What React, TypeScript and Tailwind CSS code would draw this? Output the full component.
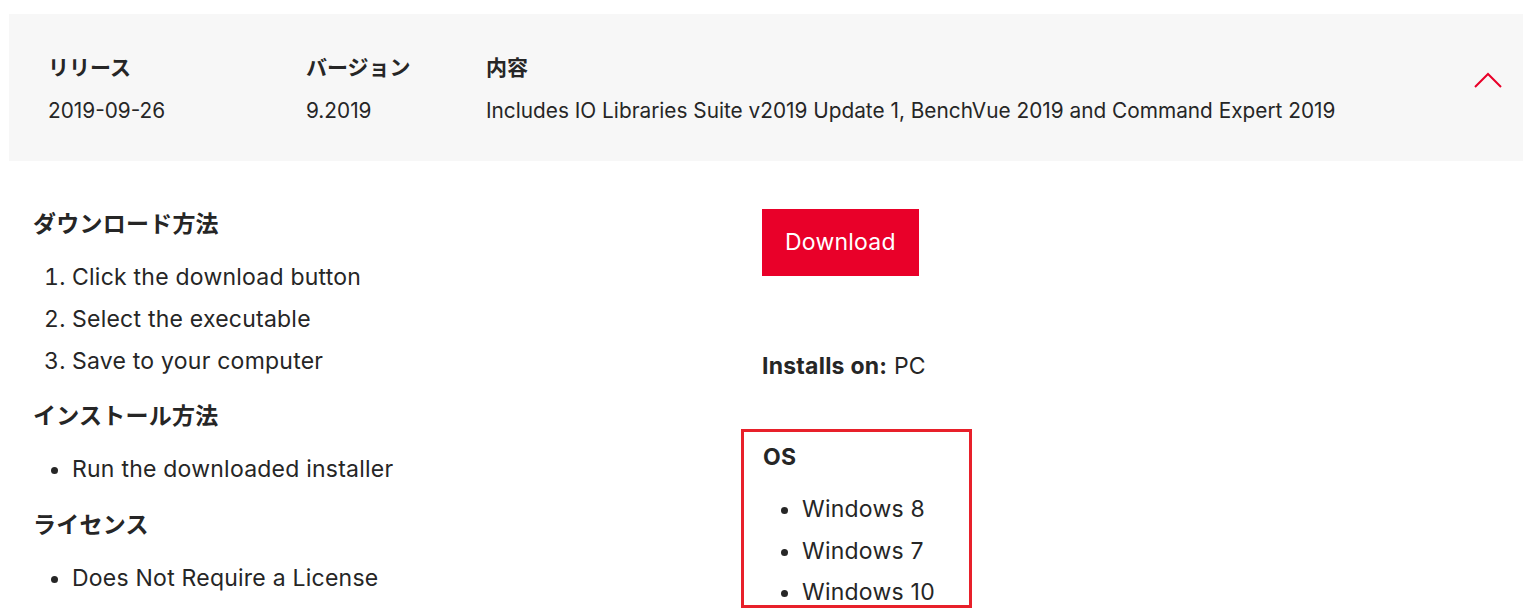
const font = "font-['Inter','Noto_Sans_CJK_JP',sans-serif]";

export default function App() {
  return (
    <div className={`w-[1536px] h-[609px] overflow-hidden bg-white text-[#262626] ${font}`}>
      {/* Release summary */}
      <div className="ml-[9px] mr-[13px] mt-[14px] h-[147px] bg-[#f7f7f7] flex items-start pl-[39px] pr-[21px] pt-[38px]">
        <Col label="リリース" value="2019-09-26" width="w-[258px]" />
        <Col label="バージョン" value="9.2019" width="w-[180px]" />
        <Col
          label="内容"
          value="Includes IO Libraries Suite v2019 Update 1, BenchVue 2019 and Command Expert 2019"
          width="flex-1"
        />
        <svg width="28" height="16" viewBox="0 0 28 16" className="mt-[20px] shrink-0">
          <polyline points="1,15 14,2 27,15" fill="none" stroke="#e90029" strokeWidth="2" />
        </svg>
      </div>

      {/* Details */}
      <div className="flex pl-[33px] text-[23px] tracking-[0.01em]">
        <div className="w-[729px] pt-[47px]">
          <Heading>ダウンロード方法</Heading>
          <ol className="list-decimal pl-[39px] mt-[16px] leading-[42px]">
            <li>Click the download button</li>
            <li>Select the executable</li>
            <li>Save to your computer</li>
          </ol>
          <Heading className="mt-[18px]">インストール方法</Heading>
          <ul className="list-disc pl-[39px] mt-[16px] leading-[42px]">
            <li>Run the downloaded installer</li>
          </ul>
          <Heading className="mt-[19px]">ライセンス</Heading>
          <ul className="list-disc pl-[39px] mt-[16px] leading-[42px]">
            <li>Does Not Require a License</li>
          </ul>
        </div>

        <div className="pt-[48px]">
          <button className="h-[67px] px-[23px] bg-[#e90029] text-white tracking-[0.01em]">
            Download
          </button>
          <p className="mt-[74px] leading-[32px]">
            <span className="font-bold">Installs on:</span> PC
          </p>
          <div className="mt-[47px] -ml-[21px] w-[231px] h-[179px] border-[3px] border-[#e8202a] pl-[19px] pt-[9px]">
            <p className="font-bold leading-[32px]">OS</p>
            <ul className="list-disc pl-[39px] mt-[16px] leading-[41.5px]">
              <li>Windows 8</li>
              <li>Windows 7</li>
              <li>Windows 10</li>
            </ul>
          </div>
        </div>
      </div>
    </div>
  );
}

function Col({ label, value, width }: { label: string; value: string; width: string }) {
  return (
    <div className={width}>
      <div className="text-[21px] font-bold leading-[32px]">{label}</div>
      <div className="text-[20.8px] leading-[32px] mt-[11px]">{value}</div>
    </div>
  );
}

function Heading({ children, className = "" }: { children: React.ReactNode; className?: string }) {
  return <h3 className={`text-[23px] font-bold leading-[32px] ${className}`}>{children}</h3>;
}
